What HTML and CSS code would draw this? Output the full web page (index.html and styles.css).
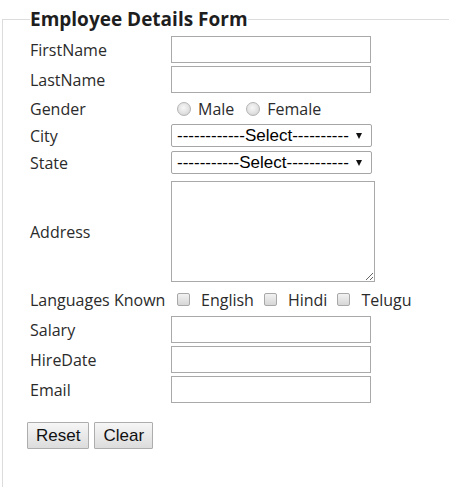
FILE: index.html
```html
<!DOCTYPE html>
<html>
<head>
<meta charset="utf-8">
<title>Employee Details Form</title>
<link rel="stylesheet" href="styles.css">
</head>
<body>
<form class="emp-form">
  <fieldset class="form-box">
    <legend class="form-title">Employee Details Form</legend>

    <div class="row row-first">
      <label class="lbl">FirstName</label>
      <input type="text" class="txt">
    </div>
    <div class="row row-gap3">
      <label class="lbl">LastName</label>
      <input type="text" class="txt">
    </div>
    <div class="row row-gap3 row-gender">
      <label class="lbl">Gender</label>
      <input type="radio" name="gender" class="radio">
      <span class="opt opt-radio">Male</span>
      <input type="radio" name="gender" class="radio">
      <span class="opt opt-radio">Female</span>
    </div>
    <div class="row row-gap3">
      <label class="lbl">City</label>
      <span class="sel-wrap">
        <select class="sel"><option>------------Select----------</option></select>
      </span>
    </div>
    <div class="row row-gap4">
      <label class="lbl">State</label>
      <span class="sel-wrap">
        <select class="sel"><option>-----------Select-----------</option></select>
      </span>
    </div>
    <div class="row row-gap7">
      <label class="lbl">Address</label>
      <textarea class="area"></textarea>
    </div>
    <div class="row row-gap5 row-lang">
      <label class="lbl">Languages Known</label>
      <input type="checkbox" class="check">
      <span class="opt opt-check">English</span>
      <input type="checkbox" class="check">
      <span class="opt opt-check">Hindi</span>
      <input type="checkbox" class="check">
      <span class="opt opt-check">Telugu</span>
    </div>
    <div class="row row-gap3">
      <label class="lbl">Salary</label>
      <input type="text" class="txt">
    </div>
    <div class="row row-gap3">
      <label class="lbl">HireDate</label>
      <input type="text" class="txt">
    </div>
    <div class="row row-gap3">
      <label class="lbl">Email</label>
      <input type="text" class="txt">
    </div>
    <div class="row row-buttons">
      <button type="reset" class="btn">Reset</button>
      <button type="button" class="btn">Clear</button>
    </div>
  </fieldset>
</form>
</body>
</html>
```
FILE: styles.css
```css
html, body {
  margin: 0;
  padding: 0;
  background: #ffffff;
  overflow: hidden;
}

body {
  width: 449px;
  height: 487px;
  font-family: "Open Sans", "Noto Sans", sans-serif;
  color: #2b2b2b;
}

.emp-form {
  margin: 0;
}

.form-box {
  margin: 7px 0 0 2px;
  width: 447px;
  height: 480px;
  border: 1px solid #dcdcdc;
  border-right: none;
  border-bottom: none;
  padding: 5px 0 0 27px;
  box-sizing: border-box;
}

.form-title {
  padding: 0;
  font-family: "Open Sans", "Noto Sans", sans-serif;
  font-weight: 700;
  font-size: 19px;
  line-height: 24px;
  color: #1e1e1e;
}

.row {
  display: flex;
  align-items: center;
}

.row-gap3 { margin-top: 3px; }
.row-gap4 { margin-top: 4px; }
.row-gap5 { margin-top: 5px; }
.row-gap7 { margin-top: 7px; }

.row-gender { height: 25px; }
.row-lang { height: 26px; }

.row-buttons {
  margin-top: 19px;
  margin-left: -3px;
  gap: 5px;
}

.lbl {
  width: 141px;
  flex: none;
  font-size: 16px;
  line-height: 22px;
}

.txt {
  width: 200px;
  height: 27px;
  box-sizing: border-box;
  margin: 0;
  border: 1px solid #a9a9a9;
  background: #fff;
  padding: 0 4px;
  font: 16px "Liberation Sans", Arial, sans-serif;
}

.area {
  width: 204px;
  height: 101px;
  box-sizing: border-box;
  margin: 0;
  border: 1px solid #a9a9a9;
  background: #fff;
  padding: 2px;
  font: 16px "Liberation Sans", Arial, sans-serif;
}

.sel-wrap {
  position: relative;
  display: block;
  width: 201px;
  height: 23px;
}

.sel {
  -webkit-appearance: none;
  appearance: none;
  width: 201px;
  height: 23px;
  box-sizing: border-box;
  margin: 0;
  border: 1px solid #a6a6a6;
  border-radius: 2px;
  background: #fff;
  padding: 0 0 0 5px;
  font: 17px "Liberation Sans", Arial, sans-serif;
  color: #000;
}

.sel-wrap::after {
  content: "";
  position: absolute;
  right: 10px;
  top: 9px;
  border-left: 3px solid transparent;
  border-right: 3px solid transparent;
  border-top: 6px solid #111;
  pointer-events: none;
}

.radio {
  -webkit-appearance: none;
  appearance: none;
  width: 14px;
  height: 14px;
  box-sizing: border-box;
  margin: 0 7px 0 6px;
  border: 1px solid #b4b4b4;
  border-radius: 50%;
  background: radial-gradient(circle at 45% 40%, #f7f7f7 0%, #e2e2e2 55%, #c9c9c9 100%);
  flex: none;
}

.radio + .opt + .radio {
  margin-left: 12px;
}

.check {
  -webkit-appearance: none;
  appearance: none;
  width: 13px;
  height: 13px;
  box-sizing: border-box;
  margin: -2px 11px 0 6px;
  border: 1px solid #a8a8a8;
  border-radius: 2px;
  background: linear-gradient(#f2f2f2, #d6d6d6);
  flex: none;
}

.opt + .check {
  margin-left: 10px;
}

.opt {
  font-size: 16px;
  line-height: 22px;
}

.btn {
  height: 27px;
  box-sizing: border-box;
  margin: 0;
  padding: 0 8px;
  border: 1px solid #adadad;
  border-radius: 1px;
  background: linear-gradient(#f6f6f6, #dcdcdc);
  font: 17px "Liberation Sans", Arial, sans-serif;
  color: #111;
}
```
